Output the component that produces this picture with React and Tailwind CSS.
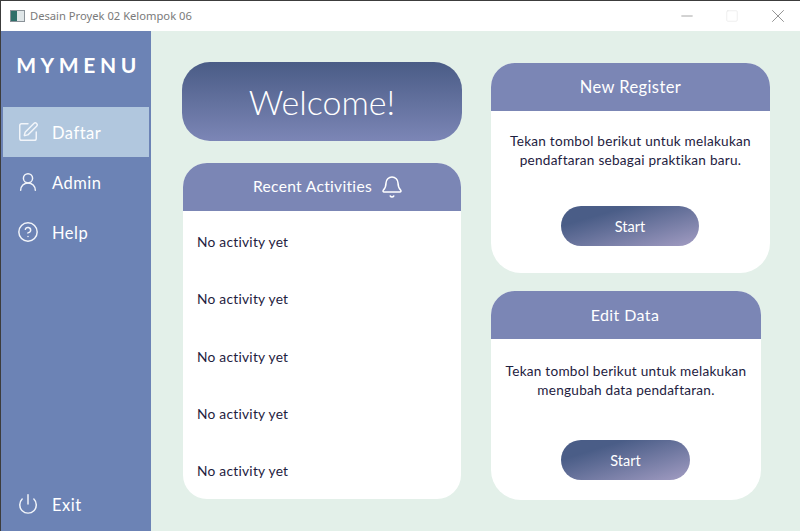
import { SquarePen, UserRound, CircleHelp, Power, Bell, Minus, Square, X } from "lucide-react";

const font = { fontFamily: '"Lato", "Noto Sans", sans-serif' };

const MENU = [
  { label: "Daftar", icon: SquarePen, active: true },
  { label: "Admin", icon: UserRound },
  { label: "Help", icon: CircleHelp },
];

const ACTIVITIES = ["a", "b", "c", "d", "e"];

const MenuItem = ({ label, icon: Icon, active }) => (
  <div className={`flex h-[50px] items-center gap-[13px] pl-[14px] ${active ? "bg-[#b1c7de]" : ""}`}>
    <Icon className="h-[22px] w-[22px] text-[#f2f5fa]" strokeWidth={1.6} />
    <span className="pt-[2px] text-[16.5px] tracking-[0.5px] text-white">{label}</span>
  </div>
);

const Card = ({ title, titleClass, text, className, buttonClass, textClass }) => (
  <div className={`flex flex-col rounded-b-[30px] rounded-t-[24px] bg-white ${className}`}>
    <div className={`flex h-[48px] items-center justify-center rounded-t-[24px] bg-[#7b86b5] tracking-[0.4px] text-white ${titleClass}`}>
      {title}
    </div>
    <p className={`whitespace-pre-line text-center text-[13.6px] leading-[19px] tracking-[0.25px] text-[#1e2140] ${textClass}`}>
      {text}
    </p>
    <button className={`ml-[70px] h-[40px] rounded-[20px] bg-gradient-to-br from-[#4a5d87] from-25% to-[#a39dc3] pt-[1px] text-[14.5px] text-white ${buttonClass}`}>
      Start
    </button>
  </div>
);

export default function App() {
  return (
    <div className="flex h-[531px] w-[800px] flex-col overflow-hidden border-l border-t border-[#3c3c3c] bg-white" style={font}>
      <div className="flex h-[30px] shrink-0 items-center bg-white">
        <div className="ml-[9px] flex h-[12px] w-[15px] border border-[#8a9298] bg-[#dfe6e8]">
          <div className="h-full w-[6px] bg-[#2f6f6a]" />
        </div>
        <span className="ml-[5px] text-[11.2px] text-[#7a7a7a]" style={{ fontFamily: '"Noto Sans", sans-serif' }}>
          Desain Proyek 02 Kelompok 06
        </span>
        <div className="ml-auto flex items-center pr-[11px]">
          <Minus className="h-[18px] w-[18px] text-[#8a8a8a]" strokeWidth={1} absoluteStrokeWidth />
          <Square className="ml-[29px] h-[14px] w-[14px] text-[#e4e4e4]" strokeWidth={1} absoluteStrokeWidth />
          <X className="ml-[28px] h-[22px] w-[22px] text-[#8a8a8a]" strokeWidth={1} absoluteStrokeWidth />
        </div>
      </div>
      <div className="flex min-h-0 flex-1 bg-[#e3f0e9]">
        <aside className="flex w-[150px] shrink-0 flex-col bg-[#6c83b5] px-[2px]">
          <div className="mt-[21px] h-[55px] pl-[5px] text-center text-[21px] font-bold leading-[26px] tracking-[4.6px] text-white">MYMENU</div>
          {MENU.map((item) => (
            <MenuItem key={item.label} {...item} />
          ))}
          <div className="mt-auto mb-[2px]">
            <MenuItem label="Exit" icon={Power} />
          </div>
        </aside>
        <main className="flex pl-[31px] pt-[31px]">
          <div className="flex w-[280px] flex-col">
            <div className="flex h-[79px] items-center justify-center rounded-[28px] bg-gradient-to-b from-[#4a5c86] to-[#7c86b6] text-[34px] font-light text-white">
              Welcome!
            </div>
            <div className="mx-[1px] mt-[22px] flex h-[336px] flex-col rounded-[24px] bg-white">
              <div className="flex h-[48px] items-center justify-center gap-[8px] rounded-t-[24px] bg-[#7b86b5] pl-[13px] text-[15.6px] tracking-[0.3px] text-white">
                Recent Activities
                <Bell className="h-[24px] w-[24px]" strokeWidth={1.5} />
              </div>
              <div className="flex flex-1 flex-col justify-between pb-[18px] pl-[14px] pt-[21px]">
                {ACTIVITIES.map((id) => (
                  <div key={id} className="text-[13.75px] leading-[20px] tracking-[0.25px] text-[#1e2140]">
                    No activity yet
                  </div>
                ))}
              </div>
            </div>
          </div>
          <div className="ml-[29px] flex flex-col gap-[18px] pt-[1px]">
            <Card
              title="New Register"
              titleClass="pt-[1px] text-[16.5px]"
              text={"Tekan tombol berikut untuk melakukan\npendaftaran sebagai praktikan baru."}
              className="h-[210px] w-[279px]"
              textClass="mt-[21px] h-[74px]"
              buttonClass="w-[138px]"
            />
            <Card
              title="Edit Data"
              titleClass="pr-[2px] text-[16px]"
              text={"Tekan tombol berikut untuk melakukan\nmengubah data pendaftaran."}
              className="h-[209px] w-[270px]"
              textClass="mt-[23px] h-[78px]"
              buttonClass="w-[129px]"
            />
          </div>
        </main>
      </div>
    </div>
  );
}
